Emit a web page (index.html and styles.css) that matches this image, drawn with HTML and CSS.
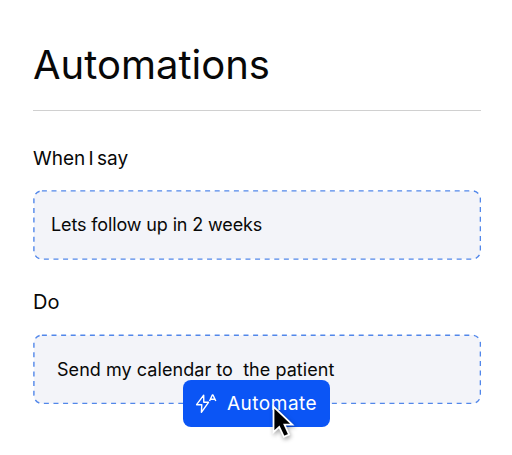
FILE: index.html
```
<!DOCTYPE html>
<html lang="en">
<head>
<meta charset="UTF-8" />
<meta name="viewport" content="width=device-width, initial-scale=1" />
<title>Automations</title>
<link rel="stylesheet" href="styles.css">
</head>
<body>
<main class="panel">
    <h1 class="title">Automations</h1>

    <h2 class="label when">When I say</h2>
    <div class="field">
        <svg class="outline" width="448" height="70"><rect x=".9" y=".9" width="446.5" height="68.2" rx="8" /></svg>
        <span class="phrase follow">Lets follow up in 2 weeks</span>
    </div>

    <h2 class="label do">Do</h2>
    <div class="field action">
        <svg class="outline" width="448" height="70"><rect x=".9" y="1.2" width="446.5" height="68.2" rx="8" /></svg>
        <span class="phrase task">Send my calendar to&nbsp; the patient</span>
        <button class="automate">
            <svg class="bolt" width="24" height="24" viewBox="0 0 24 24">
                <path d="M9.7 3.2 2.6 12.7h5.2L7.4 20.4 14.5 10.3H9.8Z" />
                <path d="M15.6 9 18.3 3h.7l2.8 6M16.6 7.2h4.2" />
            </svg>
            <span>Automate</span>
        </button>
        <svg class="cursor" width="32" height="42" viewBox="0 0 32 42">
            <path d="M3.5 2.5v25.6l5.7-5.2 4.7 10 5.2-2.4-4.6-9.8h7.8Z" />
        </svg>
    </div>
</main>
</body>
</html>
```
FILE: styles.css
```
body{
    margin: 0;
    background-color: white;
    color: #080808;
    font-family: Inter, "Liberation Sans", sans-serif;
}
.panel{
    box-sizing: border-box;
    min-height: 455px;
    padding: 40px 31px 0 33px;
}
.title{
    margin: 0;
    height: 70px;
    border-bottom: 1px solid #d0d0d0;
    font-size: 40px;
    font-weight: 400;
    line-height: 50px;
}
.label{
    margin: 0;
    font-size: 19px;
    font-weight: 400;
    line-height: 24px;
}
.when{
    padding: 36px 0 19px;
    word-spacing: -2px;
}
.do{
    padding: 30px 0 20px;
    font-size: 20px;
}
.field{
    position: relative;
    display: flex;
    align-items: center;
    width: 448px;
    height: 70px;
    box-sizing: border-box;
    padding-left: 18px;
}
.outline{
    position: absolute;
    top: 0;
    left: 0;
}
.outline rect{
    fill: #f3f4f9;
    stroke: #5287ea;
    stroke-width: 1.4;
    stroke-dasharray: 5 4.6;
}
.phrase{
    z-index: 1;
    font-size: 18px;
    line-height: 24px;
    white-space: nowrap;
}
.follow{
    letter-spacing: -0.13px;
}
.task{
    padding: 2px 0 0 6px;
    letter-spacing: 0.05px;
}
.automate{
    position: absolute;
    z-index: 2;
    top: 46px;
    left: 150px;
    display: flex;
    align-items: center;
    gap: 9px;
    width: 147px;
    height: 47px;
    padding: 0 0 0 11px;
    border: none;
    border-radius: 8px;
    background-color: #0b55f5;
    color: white;
    font-family: inherit;
    font-size: 19px;
    letter-spacing: 0.5px;
}
.bolt{
    flex: none;
    fill: none;
    stroke: white;
    stroke-width: 1.4;
    stroke-linejoin: round;
}
.cursor{
    position: absolute;
    z-index: 3;
    top: 70px;
    left: 237px;
    fill: black;
    stroke: white;
    stroke-width: 1.8;
    filter: drop-shadow(1px 2px 2px rgba(0, 0, 0, 0.35));
}
```
